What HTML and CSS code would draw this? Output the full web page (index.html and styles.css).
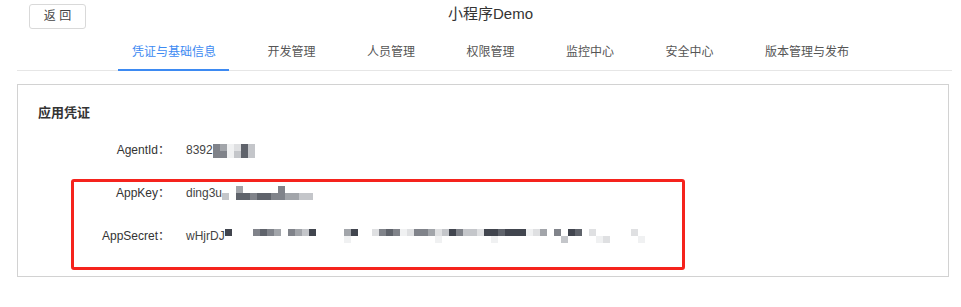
FILE: index.html
```html
<!DOCTYPE html>
<html lang="zh-CN">
<head>
<meta charset="utf-8">
<title>小程序Demo</title>
<link rel="stylesheet" href="styles.css">
</head>
<body>
<header class="top">
  <div class="top-left"><button class="back">返 回</button></div>
  <div class="title">小程序Demo</div>
  <div></div>
</header>
<nav class="tabs">
  <ul class="tab-list">
    <li class="tab active">凭证与基础信息</li>
    <li class="tab">开发管理</li>
    <li class="tab">人员管理</li>
    <li class="tab">权限管理</li>
    <li class="tab">监控中心</li>
    <li class="tab">安全中心</li>
    <li class="tab">版本管理与发布</li>
  </ul>
</nav>
<section class="card">
  <h2 class="card-title">应用凭证</h2>
  <div class="row row-out">
    <div class="label">AgentId：</div>
    <div class="value">8392<span class="mz"><i class="k5"></i><i class="k5"></i><i class="k4"></i><i class="k5"></i><i class="k1"></i><i class="k1"></i><i class="k2"></i><i class="k3"></i><i class="k6"></i><i class="k6"></i><i class="k3"></i><i class="k3"></i></span></div>
  </div>
  <div class="mark">
    <div class="row">
      <div class="label">AppKey：</div>
      <div class="value">ding3u<span class="mz"><i></i><i class="k3"></i><i></i><i></i><i class="k4"></i><i class="k6"></i><i></i><i class="k6"></i><i></i><i class="k5"></i><i></i><i class="k6"></i><i></i><i class="k6"></i><i></i><i class="k5"></i><i class="k5"></i><i class="k5"></i><i></i><i class="k4"></i><i></i><i class="k4"></i><i></i><i class="k3"></i><i></i><i class="k3"></i></span></div>
    </div>
    <div class="row row-secret">
      <div class="label">AppSecret：</div>
      <div class="value">wHjrDJ<span class="mz"><i class="k7"></i><i></i><i></i><i></i><i></i><i></i><i></i><i></i><i class="k5"></i><i></i><i class="k6"></i><i></i><i class="k5"></i><i></i><i class="k4"></i><i></i><i></i><i></i><i class="k5"></i><i></i><i class="k4"></i><i></i><i class="k3"></i><i></i><i class="k7"></i><i></i><i></i><i></i><i></i><i></i><i></i><i></i><i></i><i></i><i class="k4"></i><i class="k1"></i><i class="k7"></i><i></i><i></i><i></i><i></i><i></i><i class="k2"></i><i></i><i class="k5"></i><i></i><i class="k6"></i><i></i><i class="k5"></i><i></i><i class="k1"></i><i></i><i class="k2"></i><i></i><i class="k5"></i><i></i><i class="k5"></i><i></i><i class="k4"></i><i></i><i class="k2"></i><i class="k1"></i><i class="k3"></i><i></i><i class="k7"></i><i></i><i class="k5"></i><i></i><i class="k3"></i><i></i><i class="k3"></i><i></i><i class="k2"></i><i></i><i class="k7"></i><i></i><i class="k7"></i><i class="k1"></i><i class="k6"></i><i></i><i class="k7"></i><i></i><i class="k7"></i><i></i><i class="k7"></i><i></i><i class="k1"></i><i></i><i class="k2"></i><i></i><i class="k4"></i><i></i><i></i><i></i><i class="k5"></i><i></i><i></i><i class="k3"></i><i class="k7"></i><i></i><i class="k6"></i><i></i><i></i><i></i><i class="k2"></i><i></i><i></i><i class="k1"></i><i></i><i class="k2"></i><i></i><i></i><i></i><i></i><i></i><i></i><i class="k2"></i><i></i><i></i><i class="k1"></i></span></div>
    </div>
  </div>
</section>
</body>
</html>
```
FILE: styles.css
```css
* { box-sizing: border-box; }
html, body { margin: 0; padding: 0; background: #fff; }
body {
  width: 961px;
  height: 307px;
  overflow: hidden;
  font-family: "Liberation Sans", "Noto Sans CJK SC", sans-serif;
  color: #333;
  font-size: 12px;
}
.top {
  display: grid;
  grid-template-columns: 1fr auto 1fr;
  padding: 4px 0 6px 20px;
  height: 35px;
}
.top-left { display: flex; align-items: flex-start; }
.back {
  margin-left: 9px;
  width: 57px;
  height: 25px;
  border: 1px solid #d9d9d9;
  border-radius: 3px;
  background: #fff;
  font-family: "Liberation Sans", "Noto Sans CJK SC", sans-serif;
  font-size: 12px;
  color: #444;
  padding: 0;
  line-height: 23px;
}
.title {
  font-size: 15px;
  line-height: 18px;
  color: #333;
  padding-top: 1px;
}
.tabs {
  margin: 0 9px 0 17px;
  border-bottom: 1px solid #e6e6e6;
}
.tab-list {
  list-style: none;
  margin: 0;
  padding: 0 0 0 12px;
  display: flex;
  justify-content: center;
  gap: 24.5px;
}
.tab {
  padding: 9px 13.5px 8px;
  line-height: 17px;
  font-size: 12px;
  color: #555;
  border-bottom: 2px solid transparent;
  margin-bottom: -1px;
  white-space: nowrap;
}
.tab.active {
  color: #3d8af2;
  border-bottom-color: #3d8af2;
}
.card {
  margin: 13px 0 0 17px;
  width: 932px;
  height: 193px;
  border: 1px solid #d2d2d2;
  padding: 19px 0 0 20px;
}
.card-title {
  margin: 0;
  font-size: 13px;
  font-weight: bold;
  line-height: 17px;
  color: #333;
}
.row {
  display: flex;
  align-items: center;
  height: 17px;
  line-height: 17px;
}
.row-out { margin: 21px 0 0 36px; }
.label {
  width: 96px;
  text-align: right;
  color: #333;
  white-space: nowrap;
}
.value {
  margin-left: 16px;
  display: flex;
  align-items: center;
  color: #444;
  white-space: nowrap;
}
.mark {
  margin: 20px 0 0 33px;
  width: 614px;
  height: 91px;
  border: 3px solid #f5231d;
  border-radius: 3px;
  padding-top: 2.5px;
}
.row-secret { margin-top: 26px; }
.mz {
  display: inline-grid;
  grid-auto-flow: column;
  grid-template-rows: 7px 7px;
  grid-auto-columns: 7px;
}
.mz i { display: block; }
.k1 { background: #f0f1f2; }
.k2 { background: #dfe0e2; }
.k3 { background: #c4c6ca; }
.k4 { background: #a2a5aa; }
.k5 { background: #80838a; }
.k6 { background: #5f636b; }
.k7 { background: #41454e; }
```
